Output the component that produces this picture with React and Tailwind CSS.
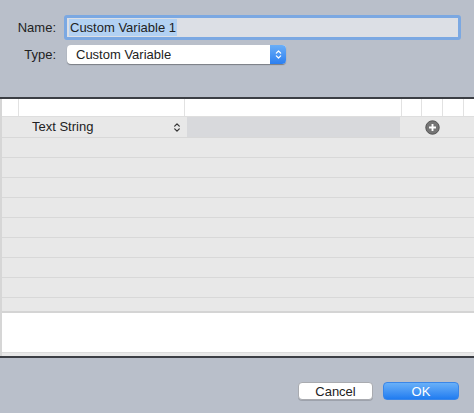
import React from "react";

const UpDown = ({ className, stroke = "#333" }) => (
    <svg viewBox="0 0 8 12" className={className} fill="none" stroke={stroke} strokeWidth="1.4" strokeLinecap="round" strokeLinejoin="round">
        <path d="M1.5 4.5 L4 2 L6.5 4.5" />
        <path d="M1.5 7.5 L4 10 L6.5 7.5" />
    </svg>
);

const PlusCircle = () => (
    <svg viewBox="0 0 16 16" className="w-[15px] h-[15px]">
        <circle cx="8" cy="8" r="7.2" fill="#757575" stroke="#4a4a4a" strokeWidth="0.9" />
        <path d="M8 4.3 V11.7 M4.3 8 H11.7" stroke="#fff" strokeWidth="2" />
    </svg>
);

const App = () => {
    const emptyRows = [0, 1, 2, 3, 4, 5, 6, 7];

    return (
        <div className="w-[474px] h-[413px] flex flex-col overflow-hidden text-[13px] text-[#222]" style={{ fontFamily: '"Liberation Sans", Arial, sans-serif' }}>
            {/* top form */}
            <div className="h-[97px] bg-[#b9bfca] pt-[15px] flex flex-col gap-[5px]">
                <div className="flex items-center">
                    <div className="w-[56px] text-right">Name:</div>
                    <div className="ml-[8px] w-[397px] h-[25px] rounded-[3px] border-[3px] border-[#7ba8e2] bg-[#dcdfe5] flex items-center pl-[2px]">
                        <span className="bg-[#b2d1f3] px-[1px] leading-[17px]">Custom Variable 1</span>
                    </div>
                </div>
                <div className="flex items-center">
                    <div className="w-[56px] text-right">Type:</div>
                    <div className="ml-[11px] w-[219px] h-[19px] rounded-[4px] bg-white shadow-[0_1px_1px_rgba(0,0,0,0.35)] flex items-center overflow-hidden">
                        <span className="flex-1 pl-[9px]">Custom Variable</span>
                        <div className="w-[16px] h-full bg-gradient-to-b from-[#6aaef7] to-[#2b7ff0] flex items-center justify-center">
                            <UpDown className="w-[7px] h-[11px]" stroke="#fff" />
                        </div>
                    </div>
                </div>
            </div>
            <div className="h-[2px] bg-[#3b3e44]" />

            {/* table */}
            <div className="flex-1 flex flex-col bg-[#e8e8e8] border-l-2 border-[#d6d6d6]">
                <div className="h-[18px] bg-white border-b border-[#dedede] flex shrink-0">
                    <div className="w-[17px] border-r border-[#e2e2e2]" />
                    <div className="w-[166px] border-r border-[#e2e2e2]" />
                    <div className="w-[217px] border-r border-[#e2e2e2]" />
                    <div className="w-[20px] border-r border-[#e2e2e2]" />
                    <div className="w-[21px] border-r border-[#e2e2e2]" />
                    <div className="w-[21px] border-r border-[#e2e2e2]" />
                </div>
                <div className="h-[21px] flex items-stretch border-b border-[#d8d8d8] shrink-0">
                    <div className="w-[183px] flex items-center pl-[30px] pr-[4px]">
                        <span className="flex-1">Text String</span>
                        <UpDown className="w-[8px] h-[11px]" />
                    </div>
                    <div className="w-[213px] ml-[2px] bg-[#d8d9dc]" />
                    <div className="flex-1 flex items-center pl-[25px]">
                        <PlusCircle />
                    </div>
                </div>
                {emptyRows.map((r) => (
                    <div key={r} className="h-[20px] border-b border-[#d8d8d8] shrink-0" />
                ))}
                <div className="flex-1 border-b-2 border-[#d4d4d4]" />
                <div className="h-[40px] bg-white border-b border-[#dcdcdc] shrink-0" />
                <div className="h-[3px] shrink-0" />
            </div>
            <div className="h-[2px] bg-[#3b3e44]" />

            {/* buttons */}
            <div className="h-[55px] bg-[#b9bfca] flex items-start justify-end pt-[24px] pr-[15px] gap-[10px]">
                <button className="w-[75px] h-[18px] rounded-[4px] bg-white border border-[#a9abb0] shadow-[0_1px_0_rgba(0,0,0,0.15)] flex items-center justify-center leading-none">Cancel</button>
                <button className="w-[76px] h-[18px] rounded-[4px] bg-gradient-to-b from-[#69b0f8] to-[#1f7cf0] border border-[#3a86e8] text-white flex items-center justify-center leading-none">OK</button>
            </div>
        </div>
    );
};

export default App;
